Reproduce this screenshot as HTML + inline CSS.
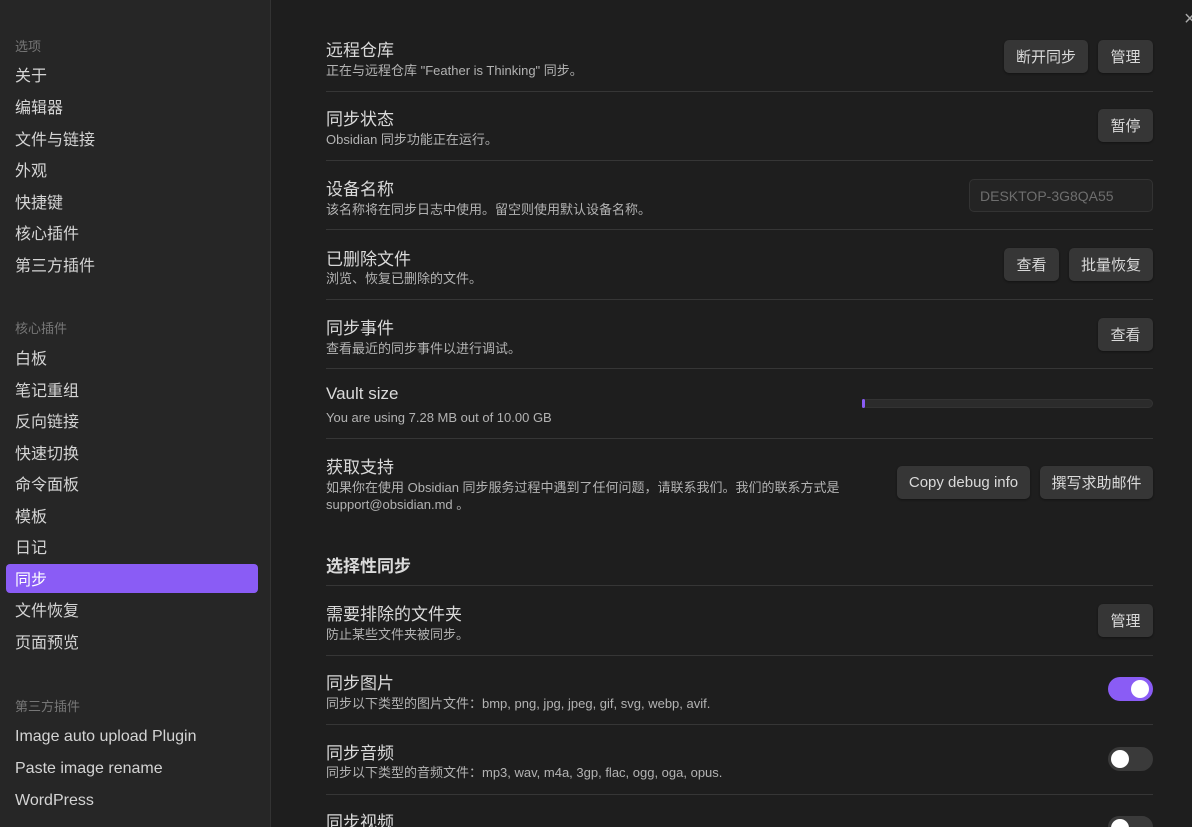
<!DOCTYPE html>
<html style="overflow:hidden;height:827px"><head><meta charset="utf-8"><style>
*{margin:0;padding:0;box-sizing:border-box}
body{width:1192px;height:827px;overflow:hidden;background:#1e1e1e;font-family:"Liberation Sans","Noto Sans CJK SC",sans-serif;color:#dadada;position:relative}
.side{position:absolute;left:0;top:0;width:271px;height:827px;background:#262626;border-right:1px solid #333}
.h{position:absolute;left:15px;font-size:13px;color:#777}
.it{position:absolute;left:15px;font-size:16px;color:#d4d4d4;line-height:20px}
.act{position:absolute;left:6px;top:564px;width:252px;height:29px;background:#8a5cf5;border-radius:4px}
.t{position:absolute;left:326px;font-size:17px;color:#dadada}
.d{position:absolute;left:326px;font-size:13px;color:#b3b3b3;line-height:17px}
.hr{position:absolute;left:326px;width:827px;height:1px;background:#363636}
.b{position:absolute;height:33px;background:#363636;border-radius:5px;font-size:15px;color:#dadada;display:flex;align-items:center;justify-content:center;box-shadow:0 1px 2px rgba(0,0,0,.4)}
.tg{position:absolute;left:1108px;width:45px;height:24px;border-radius:12px;background:#3a3a3a;overflow:hidden}
.tg i{position:absolute;top:3px;width:18px;height:18px;border-radius:50%;background:#fff}
</style></head><body>
<div class="side">
<div class="h" style="top:36px">选项</div>
<div class="it" style="top:67px">关于</div>
<div class="it" style="top:99px">编辑器</div>
<div class="it" style="top:131px">文件与链接</div>
<div class="it" style="top:162px">外观</div>
<div class="it" style="top:194px">快捷键</div>
<div class="it" style="top:225px">核心插件</div>
<div class="it" style="top:257px">第三方插件</div>
<div class="h" style="top:318px">核心插件</div>
<div class="it" style="top:350px">白板</div>
<div class="it" style="top:382px">笔记重组</div>
<div class="it" style="top:413px">反向链接</div>
<div class="it" style="top:445px">快速切换</div>
<div class="it" style="top:476px">命令面板</div>
<div class="it" style="top:508px">模板</div>
<div class="it" style="top:539px">日记</div>
<div class="act"></div>
<div class="it" style="top:571px;color:#fff">同步</div>
<div class="it" style="top:602px">文件恢复</div>
<div class="it" style="top:634px">页面预览</div>
<div class="h" style="top:696px">第三方插件</div>
<div class="it" style="top:727px">Image auto upload Plugin</div>
<div class="it" style="top:759px">Paste image rename</div>
<div class="it" style="top:791px">WordPress</div>
</div>
<div style="position:absolute;left:1184px;top:8px;color:#aaa;font-size:20px">×</div>

<div class="t" style="top:36px">远程仓库</div>
<div class="d" style="top:62px">正在与远程仓库 "Feather is Thinking" 同步。</div>
<div class="b" style="left:1004px;top:40px;width:84px">断开同步</div>
<div class="b" style="left:1098px;top:40px;width:55px">管理</div>
<div class="hr" style="top:91px"></div>

<div class="t" style="top:105px">同步状态</div>
<div class="d" style="top:131px">Obsidian 同步功能正在运行。</div>
<div class="b" style="left:1098px;top:109px;width:55px">暂停</div>
<div class="hr" style="top:160px"></div>

<div class="t" style="top:175px">设备名称</div>
<div class="d" style="top:201px">该名称将在同步日志中使用。留空则使用默认设备名称。</div>
<div style="position:absolute;left:969px;top:179px;width:184px;height:33px;border:1px solid #333;background:#242424;border-radius:5px;color:#6e6e6e;font-size:14px;padding:8px 10px">DESKTOP-3G8QA55</div>
<div class="hr" style="top:229px"></div>

<div class="t" style="top:245px">已删除文件</div>
<div class="d" style="top:270px">浏览、恢复已删除的文件。</div>
<div class="b" style="left:1004px;top:248px;width:55px">查看</div>
<div class="b" style="left:1069px;top:248px;width:84px">批量恢复</div>
<div class="hr" style="top:299px"></div>

<div class="t" style="top:314px">同步事件</div>
<div class="d" style="top:340px">查看最近的同步事件以进行调试。</div>
<div class="b" style="left:1098px;top:318px;width:55px">查看</div>
<div class="hr" style="top:368px"></div>

<div class="t" style="top:384px">Vault size</div>
<div class="d" style="top:409px">You are using 7.28 MB out of 10.00 GB</div>
<div style="position:absolute;left:862px;top:399px;width:291px;height:9px;border-radius:5px;background:#2b2b2b;border:1px solid #333"></div>
<div style="position:absolute;left:862px;top:399px;width:3px;height:9px;border-radius:2px;background:#8a5cf5"></div>
<div class="hr" style="top:438px"></div>

<div class="t" style="top:453px">获取支持</div>
<div class="d" style="top:479px">如果你在使用 Obsidian 同步服务过程中遇到了任何问题，请联系我们。我们的联系方式是<br>support@obsidian.md 。</div>
<div class="b" style="left:897px;top:466px;width:133px">Copy debug info</div>
<div class="b" style="left:1040px;top:466px;width:113px">撰写求助邮件</div>

<div style="position:absolute;left:326px;top:552px;font-size:17px;font-weight:bold;color:#dadada">选择性同步</div>
<div class="hr" style="top:585px"></div>

<div class="t" style="top:600px">需要排除的文件夹</div>
<div class="d" style="top:626px">防止某些文件夹被同步。</div>
<div class="b" style="left:1098px;top:604px;width:55px">管理</div>
<div class="hr" style="top:655px"></div>

<div class="t" style="top:669px">同步图片</div>
<div class="d" style="top:695px">同步以下类型的图片文件：bmp, png, jpg, jpeg, gif, svg, webp, avif.</div>
<div class="tg" style="top:677px;background:#8a5cf5"><i style="left:23px"></i></div>
<div class="hr" style="top:724px"></div>

<div class="t" style="top:739px">同步音频</div>
<div class="d" style="top:764px">同步以下类型的音频文件：mp3, wav, m4a, 3gp, flac, ogg, oga, opus.</div>
<div class="tg" style="top:747px"><i style="left:3px"></i></div>
<div class="hr" style="top:794px"></div>

<div class="t" style="top:808px">同步视频</div>
<div class="tg" style="top:816px;height:11px;border-radius:12px 12px 0 0"><i style="left:3px"></i></div>
</body></html>
